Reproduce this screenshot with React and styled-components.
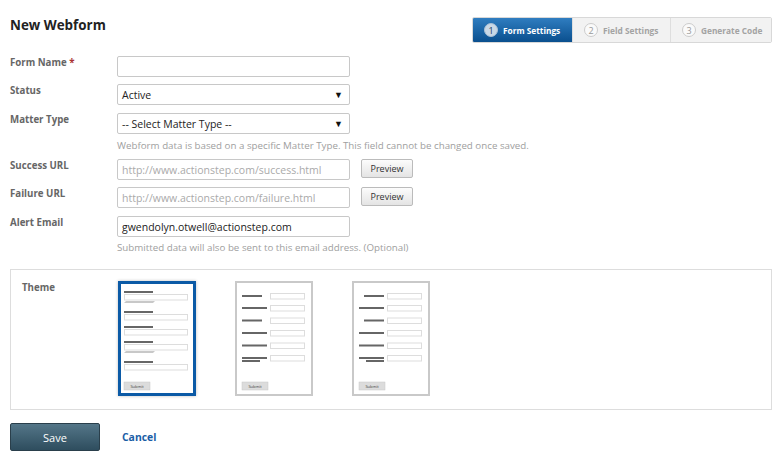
import styled, { createGlobalStyle } from 'styled-components';

const GlobalStyle = createGlobalStyle`
    body {
        margin: 0;
        background: #fff;
        font-family: 'Open Sans', 'Liberation Sans', sans-serif;
        color: #333;
    }
`;

const Page = styled.div`
    width: 762px;
    padding: 17px 0 0 10px;
`;

const Header = styled.div`
    display: flex;
    justify-content: space-between;
    align-items: flex-start;
    height: 26px;
`;

const Title = styled.h1`
    margin: 0;
    font-size: 13.4px;
    font-weight: 700;
    line-height: 16px;
    color: #222;
`;

const Steps = styled.div`
    display: flex;
    border: 1px solid #d8d8d8;
    border-radius: 2px;
    overflow: hidden;
    height: 24px;
`;

const Step = styled.div`
    display: flex;
    align-items: center;
    gap: 5px;
    width: ${(p) => p.$w}px;
    padding-left: 11px;
    box-sizing: border-box;
    white-space: nowrap;
    font-size: 8.3px;
    font-weight: 700;
    color: ${(p) => (p.$active ? '#fff' : '#a3a3a3')};
    background: ${(p) => (p.$active ? 'linear-gradient(#2f7dc0, #0a4f8e)' : '#f2f2f2')};
    border-left: ${(p) => (p.$first ? 'none' : '1px solid #dedede')};
`;

const StepNum = styled.span`
    display: inline-flex;
    align-items: center;
    justify-content: center;
    width: 12px;
    height: 12px;
    border-radius: 50%;
    font-size: 9px;
    font-weight: 400;
    color: ${(p) => (p.$active ? '#1c3d5e' : '#999')};
    background: ${(p) => (p.$active ? '#c9d8e6' : '#fafafa')};
    border: 1px solid ${(p) => (p.$active ? '#a9c0d6' : '#ccc')};
`;

const Form = styled.div`
    margin-top: 13px;
`;

const Row = styled.div`
    display: grid;
    grid-template-columns: 107px auto;
    align-items: start;
    margin-bottom: ${(p) => p.$gap ?? 7}px;
`;

const Label = styled.div`
    font-size: 9.7px;
    font-weight: 700;
    color: #666;
    line-height: 14px;
    padding-top: ${(p) => p.$top ?? 0}px;
`;

const Required = styled.span`
    color: #a33;
`;

const Field = styled.div`
    display: flex;
    align-items: flex-start;
    gap: 11px;
`;

const Input = styled.div`
    width: 233px;
    height: 21px;
    box-sizing: border-box;
    border: 1px solid #c8c8c8;
    border-radius: 2px;
    padding: 0 4px;
    display: flex;
    align-items: center;
    justify-content: space-between;
    white-space: nowrap;
    font-size: 10.5px;
    color: ${(p) => (p.$placeholder ? '#aaa' : '#222')};
    background: #fff;
`;

const Arrow = styled.span`
    font-size: 9px;
    color: #111;
    margin-right: 2px;
`;

const SmallButton = styled.div`
    width: 52px;
    height: 19px;
    box-sizing: border-box;
    border: 1px solid #bbb;
    border-radius: 2px;
    background: linear-gradient(#fcfcfc, #e4e4e4);
    display: flex;
    align-items: center;
    justify-content: center;
    font-size: 9px;
    color: #333;
`;

const Help = styled.div`
    margin: ${(p) => p.$m};
    padding-left: 107px;
    font-size: 9.75px;
    line-height: 14px;
    color: #a0a0a0;
`;

const ThemeBox = styled.div`
    display: grid;
    grid-template-columns: 96px auto;
    border: 1px solid #ddd;
    padding: 11px 11px 13px;
    height: 141px;
    box-sizing: border-box;
`;

const ThemeList = styled.div`
    display: flex;
    gap: 39px;
`;

const ThemeCard = styled.div`
    width: 78px;
    height: 115px;
    box-sizing: border-box;
    border: ${(p) => (p.$selected ? '3px solid #0b5aa6' : '2px solid #c9c9c9')};
    box-shadow: ${(p) => (p.$selected ? '0 0 3px rgba(0,0,0,0.25)' : 'none')};
    background: #fff;
    svg {
        display: block;
    }
`;

const Actions = styled.div`
    display: flex;
    align-items: center;
    gap: 22px;
    margin-top: 13px;
`;

const SaveButton = styled.div`
    width: 90px;
    height: 28px;
    box-sizing: border-box;
    border: 1px solid #2a3f4b;
    border-radius: 2px;
    background: linear-gradient(#547688, #2e4d5e);
    color: #fff;
    font-size: 11px;
    display: flex;
    align-items: center;
    justify-content: center;
`;

const CancelLink = styled.a`
    color: #1b5ea6;
    font-size: 10.4px;
    font-weight: 700;
    text-decoration: none;
`;

const Submit = ({ x }) => (
    <g>
        <rect x={x} y={101} width={26} height={8} fill="#dcdcdc" stroke="#c8c8c8" strokeWidth="0.5" />
        <text x={x + 13} y={106.5} fontSize="4" textAnchor="middle" fill="#444" fontFamily="Open Sans, sans-serif">
            Submit
        </text>
    </g>
);

const StackedThumb = () => {
    const rows = [10, 30, 45, 60, 80];
    return (
        <svg width="72" height="109" viewBox="3 3 72 109">
            {rows.map((y) => (
                <g key={y}>
                    <rect x={6} y={y} width={29} height={2} fill="#666" />
                    <rect x={6.5} y={y + 3.5} width={63} height={5.5} fill="#fff" stroke="#ddd" strokeWidth="1" />
                </g>
            ))}
            <polygon points="8,20 37,20 35,22 6,22" fill="#c8c8c8" />
            <polygon points="8,70 37,70 35,72 6,72" fill="#c8c8c8" />
            <Submit x={6} />
        </svg>
    );
};

const SideThumb = ({ right }) => {
    const rows = [
        [14, 20],
        [26, 25],
        [38.5, 20],
        [51, 25],
        [63.5, 25],
        [76, 25],
    ];
    return (
        <svg width="74" height="111" viewBox="2 2 74 111">
            {rows.map(([y, w]) => (
                <g key={y}>
                    <rect x={right ? 32 - w : 7} y={y} width={w} height={2} fill="#666" />
                    <rect x={35.5} y={y - 1.5} width={34} height={5.5} fill="#fff" stroke="#ddd" strokeWidth="1" />
                </g>
            ))}
            <rect x={right ? 32 - 18 : 7} y={79} width={18} height={2} fill="#666" />
            <Submit x={7} />
        </svg>
    );
};

const App = () => {
    return (
        <Page>
            <GlobalStyle />
            <Header>
                <Title>New Webform</Title>
                <Steps>
                    <Step $active $first $w={99}>
                        <StepNum $active>1</StepNum>
                        Form Settings
                    </Step>
                    <Step $w={98}>
                        <StepNum>2</StepNum>
                        Field Settings
                    </Step>
                    <Step $w={101}>
                        <StepNum>3</StepNum>
                        Generate Code
                    </Step>
                </Steps>
            </Header>
            <Form>
                <Row>
                    <Label>
                        Form Name <Required>*</Required>
                    </Label>
                    <Field>
                        <Input />
                    </Field>
                </Row>
                <Row $gap={8}>
                    <Label>Status</Label>
                    <Field>
                        <Input>
                            Active<Arrow>▼</Arrow>
                        </Input>
                    </Field>
                </Row>
                <Row $gap={0}>
                    <Label>Matter Type</Label>
                    <Field>
                        <Input>
                            -- Select Matter Type --<Arrow>▼</Arrow>
                        </Input>
                    </Field>
                </Row>
                <Help $m="5px 0 6px">Webform data is based on a specific Matter Type. This field cannot be changed once saved.</Help>
                <Row>
                    <Label>Success URL</Label>
                    <Field>
                        <Input $placeholder>http://www.actionstep.com/success.html</Input>
                        <SmallButton>Preview</SmallButton>
                    </Field>
                </Row>
                <Row $gap={8}>
                    <Label>Failure URL</Label>
                    <Field>
                        <Input $placeholder>http://www.actionstep.com/failure.html</Input>
                        <SmallButton>Preview</SmallButton>
                    </Field>
                </Row>
                <Row $gap={0}>
                    <Label>Alert Email</Label>
                    <Field>
                        <Input>gwendolyn.otwell@actionstep.com</Input>
                    </Field>
                </Row>
                <Help $m="4px 0 14px">Submitted data will also be sent to this email address. (Optional)</Help>
                <ThemeBox>
                    <Label>Theme</Label>
                    <ThemeList>
                        <ThemeCard $selected>
                            <StackedThumb />
                        </ThemeCard>
                        <ThemeCard>
                            <SideThumb />
                        </ThemeCard>
                        <ThemeCard>
                            <SideThumb right />
                        </ThemeCard>
                    </ThemeList>
                </ThemeBox>
                <Actions>
                    <SaveButton>Save</SaveButton>
                    <CancelLink href="#">Cancel</CancelLink>
                </Actions>
            </Form>
        </Page>
    );
};

export default App;
